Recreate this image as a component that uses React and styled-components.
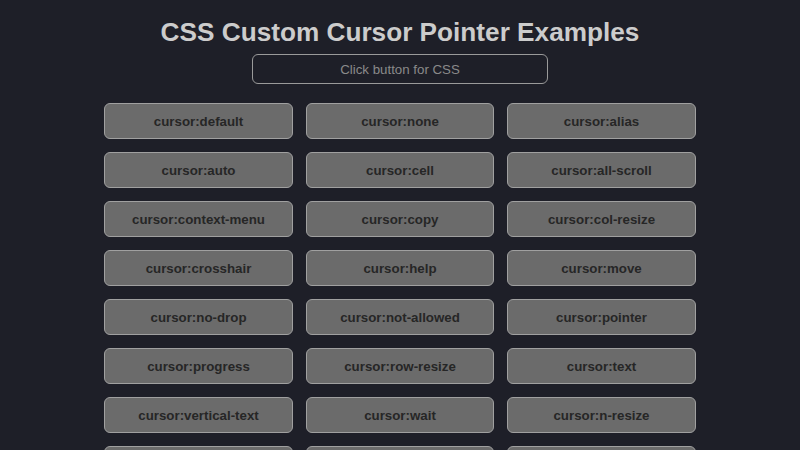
import styled, { createGlobalStyle } from "styled-components";

const Global = createGlobalStyle`
  html, body {
    margin: 0;
    background: #1e1f28;
    font-family: "Liberation Sans", Arial, sans-serif;
  }
`;

const Page = styled.div`
  display: flex;
  flex-direction: column;
  align-items: center;
  padding-top: 16px;
`;

const Title = styled.h1`
  margin: 0;
  font-size: 26.2px;
  font-weight: 700;
  color: #cccccc;
  line-height: 32px;
`;

const Output = styled.input`
  box-sizing: border-box;
  margin-top: 6px;
  width: 296px;
  height: 30px;
  border: 1px solid #9a9a9a;
  border-radius: 6px;
  background: transparent;
  color: #cccccc;
  text-align: center;
  font-family: "Liberation Sans", Arial, sans-serif;
  font-size: 13.3px;
  outline: none;
  &::placeholder {
    color: #8a8a8a;
  }
`;

const Grid = styled.div`
  display: grid;
  grid-template-columns: repeat(3, 188.5px);
  column-gap: 13px;
  row-gap: 13px;
  margin-top: 19px;
`;

const CursorButton = styled.button`
  box-sizing: border-box;
  height: 36px;
  background: #6b6b6b;
  border: 1.5px solid #a0a0a0;
  border-radius: 6px;
  color: #262626;
  font-family: "Liberation Sans", Arial, sans-serif;
  font-size: 13.3px;
  font-weight: 700;
  cursor: ${(p) => p.kind};
`;

const CURSORS = [
  "default", "none", "alias",
  "auto", "cell", "all-scroll",
  "context-menu", "copy", "col-resize",
  "crosshair", "help", "move",
  "no-drop", "not-allowed", "pointer",
  "progress", "row-resize", "text",
  "vertical-text", "wait", "n-resize",
  "e-resize", "s-resize", "w-resize",
  "ne-resize", "nw-resize", "se-resize",
  "sw-resize", "ew-resize", "ns-resize",
];

export default function App() {
  return (
    <Page>
      <Global />
      <Title>CSS Custom Cursor Pointer Examples</Title>
      <Output placeholder="Click button for CSS" readOnly />
      <Grid>
        {CURSORS.map((c) => (
          <CursorButton key={c} kind={c}>
            cursor:{c}
          </CursorButton>
        ))}
      </Grid>
    </Page>
  );
}
